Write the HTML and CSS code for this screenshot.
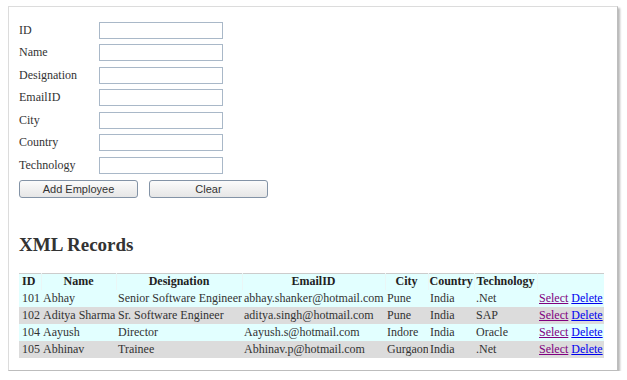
FILE: index.html
```html
<!DOCTYPE html>
<html lang="en">
<head>
    <meta charset="UTF-8">
    <title>XML Records</title>
    <link rel="stylesheet" href="styles.css">
</head>
<body>
    <div class="frame">
        <div class="employee-form">
            <div class="field"><label for="id">ID</label><input type="text" id="id"></div>
            <div class="field"><label for="name">Name</label><input type="text" id="name"></div>
            <div class="field"><label for="designation">Designation</label><input type="text" id="designation"></div>
            <div class="field"><label for="email">EmailID</label><input type="text" id="email"></div>
            <div class="field"><label for="city">City</label><input type="text" id="city"></div>
            <div class="field"><label for="country">Country</label><input type="text" id="country"></div>
            <div class="field"><label for="technology">Technology</label><input type="text" id="technology"></div>
            <div class="actions">
                <button type="button">Add Employee</button>
                <button type="button">Clear</button>
            </div>
        </div>

        <h2>XML Records</h2>

        <table class="records">
            <colgroup>
                <col style="width: 22px">
                <col style="width: 75px">
                <col style="width: 126px">
                <col style="width: 143px">
                <col style="width: 43px">
                <col style="width: 46px">
                <col style="width: 63px">
                <col style="width: 67px">
            </colgroup>
            <thead>
                <tr>
                    <th>ID</th><th>Name</th><th>Designation</th><th>EmailID</th><th>City</th><th>Country</th><th>Technology</th><th></th>
                </tr>
            </thead>
            <tbody>
                <tr class="row">
                    <td>101</td><td>Abhay</td><td>Senior Software Engineer</td><td>abhay.shanker@hotmail.com</td><td>Pune</td><td>India</td><td>.Net</td>
                    <td><a href="#" class="select">Select</a> <a href="#" class="delete">Delete</a></td>
                </tr>
                <tr class="alt">
                    <td>102</td><td>Aditya Sharma</td><td>Sr. Software Engineer</td><td>aditya.singh@hotmail.com</td><td>Pune</td><td>India</td><td>SAP</td>
                    <td><a href="#" class="select">Select</a> <a href="#" class="delete">Delete</a></td>
                </tr>
                <tr class="row">
                    <td>104</td><td>Aayush</td><td>Director</td><td>Aayush.s@hotmail.com</td><td>Indore</td><td>India</td><td>Oracle</td>
                    <td><a href="#" class="select">Select</a> <a href="#" class="delete">Delete</a></td>
                </tr>
                <tr class="alt">
                    <td>105</td><td>Abhinav</td><td>Trainee</td><td>Abhinav.p@hotmail.com</td><td>Gurgaon</td><td>India</td><td>.Net</td>
                    <td><a href="#" class="select">Select</a> <a href="#" class="delete">Delete</a></td>
                </tr>
            </tbody>
        </table>
    </div>
</body>
</html>
```

FILE: styles.css
```css
body {
    margin: 0;
    padding: 0;
    background-color: #ffffff;
    font-family: "Liberation Serif", "Times New Roman", serif;
    font-size: 12px;
    color: #2a2a2a;
}
.frame {
    box-sizing: border-box;
    width: 610px;
    margin: 6px 0 0 8px;
    padding: 15px 0 12px 10px;
    border: 1px solid #dcdcdc;
    border-right-color: #bdbdbd;
    border-bottom-color: #bdbdbd;
    box-shadow: 2px 2px 2px rgba(0, 0, 0, 0.28);
    background-color: #ffffff;
}
.employee-form {
    display: flex;
    flex-direction: column;
    gap: 5.45px;
}
.field {
    display: flex;
    align-items: center;
    height: 17px;
}
.field label {
    width: 80px;
    color: #333333;
}
.field input {
    box-sizing: border-box;
    width: 124px;
    height: 17px;
    margin: 0;
    padding: 0 2px;
    border: 1px solid #a9b8c8;
    background-color: #ffffff;
}
.actions {
    display: flex;
    gap: 11px;
    margin-top: 0.55px;
}
.actions button {
    box-sizing: border-box;
    width: 119px;
    height: 18px;
    padding: 0;
    border: 1px solid #8393a6;
    border-radius: 3px;
    background: linear-gradient(#fbfbfb, #e6e6e6);
    font-family: "Liberation Sans", Arial, sans-serif;
    font-size: 11px;
    color: #333333;
}
h2 {
    margin: 36.6px 0 0 0;
    font-size: 19px;
    line-height: 22px;
    font-weight: bold;
    color: #333333;
}
.records {
    table-layout: fixed;
    width: 585px;
    margin-top: 16.7px;
    border-collapse: collapse;
    white-space: nowrap;
}
.records thead tr {
    background-color: #e2ffff;
    border-top: 1px solid #cccccc;
}
.records th {
    height: 16px;
    padding: 0 1px;
    font-weight: bold;
    color: #222222;
    text-align: center;
    border-left: 1px solid #eaf6f6;
}
.records th:first-child {
    border-left: none;
    text-align: left;
    padding-left: 3px;
}
.records td {
    height: 17px;
    padding: 0 2px;
    overflow: hidden;
    color: #333333;
}
.records td:first-child {
    padding-left: 3px;
}
.records .row {
    background-color: #e2ffff;
}
.records .alt {
    background-color: #dcdcdc;
}
.select {
    color: #800080;
}
.delete {
    color: #0000ee;
}
```
